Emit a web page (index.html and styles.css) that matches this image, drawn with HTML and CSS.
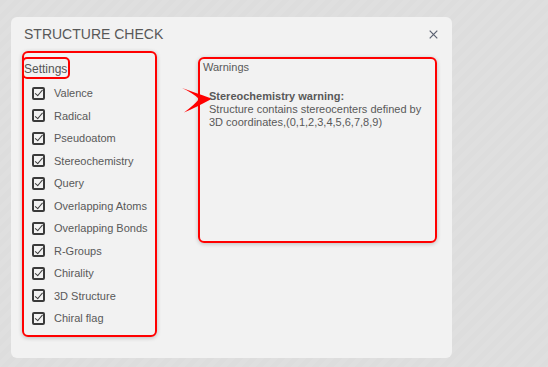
FILE: index.html
```html
<!DOCTYPE html>
<html>
<head>
<meta charset="utf-8">
<link rel="stylesheet" href="styles.css">
</head>
<body>
<div class="dialog">
  <div class="header">
    <span class="title">STRUCTURE CHECK</span>
    <svg class="close" width="9" height="9" viewBox="0 0 9 9"><path d="M0.7 0.7L8.3 8.3M8.3 0.7L0.7 8.3" stroke="#5a6070" stroke-width="1.2" fill="none"/></svg>
  </div>
  <div class="content">
    <div class="settings">
      <div class="settings-label">Settings</div>
      <div class="mark"></div>
      <ul class="list">
        <li class="row"><span class="cb"></span><span>Valence</span></li>
        <li class="row"><span class="cb"></span><span>Radical</span></li>
        <li class="row"><span class="cb"></span><span>Pseudoatom</span></li>
        <li class="row"><span class="cb"></span><span>Stereochemistry</span></li>
        <li class="row"><span class="cb"></span><span>Query</span></li>
        <li class="row"><span class="cb"></span><span>Overlapping Atoms</span></li>
        <li class="row"><span class="cb"></span><span>Overlapping Bonds</span></li>
        <li class="row"><span class="cb"></span><span>R-Groups</span></li>
        <li class="row"><span class="cb"></span><span>Chirality</span></li>
        <li class="row"><span class="cb"></span><span>3D Structure</span></li>
        <li class="row"><span class="cb"></span><span>Chiral flag</span></li>
      </ul>
    </div>
    <div class="warnings">
      <div class="warnings-label">Warnings</div>
      <svg class="arrow" width="32" height="28" viewBox="0 0 32 28"><path d="M2 2 C10 5 20 8 30 12 L30.5 13.5 C22 18 12 23 4 26.5 C11 21 16 17 19 13 C15 9 9 5 2 2 Z" fill="#f00"/></svg>
      <div class="msg">
        <div class="msg-title">Stereochemistry warning:</div>
        <div>Structure contains stereocenters defined by 3D coordinates,(0,1,2,3,4,5,6,7,8,9)</div>
      </div>
    </div>
  </div>
</div>
</body>
</html>
```
FILE: styles.css
```css
html, body {
  margin: 0;
  padding: 0;
}
body {
  width: 548px;
  height: 367px;
  overflow: hidden;
  background: repeating-linear-gradient(135deg, #dddddd 0 5px, #dfdfdf 5px 10px);
  font-family: "Liberation Sans", Arial, sans-serif;
  color: #555;
}
.dialog {
  position: relative;
  margin: 17px 0 0 11px;
  width: 441px;
  height: 341px;
  box-sizing: border-box;
  background: #f2f2f2;
  border-radius: 6px;
  padding: 7px 14px 0 11px;
}
.header {
  display: flex;
  justify-content: space-between;
  align-items: center;
  height: 20px;
}
.title {
  font-size: 14px;
  line-height: 20px;
  color: #585858;
  padding-left: 2px;
}
.close {
  display: block;
  margin-top: 1px;
}
.content {
  display: flex;
  align-items: flex-start;
  gap: 41px;
  margin-top: 7px;
}
.settings {
  position: relative;
  width: 135px;
  height: 286px;
  box-sizing: border-box;
  border: 2px solid #f00;
  border-radius: 6px;
  box-shadow: 0 1px 4px rgba(0,0,0,0.22);
  padding: 9px 0 0 0;
}
.settings-label {
  font-size: 12px;
  line-height: 14px;
  color: #555;
}
.mark {
  position: absolute;
  left: -2px;
  top: 4px;
  width: 48px;
  height: 22px;
  box-sizing: border-box;
  border: 2px solid #f00;
  border-radius: 5px;
}
.list {
  list-style: none;
  margin: 6px 0 0 0;
  padding: 0 0 0 8px;
}
.row {
  display: flex;
  align-items: center;
  gap: 9px;
  height: 22.5px;
  font-size: 11px;
  color: #595959;
}
.cb {
  position: relative;
  width: 13px;
  height: 13px;
  box-sizing: border-box;
  border: 2px solid #3a3a3a;
  border-radius: 2px;
  flex: none;
}
.cb::after {
  content: "";
  position: absolute;
  left: 2.8px;
  top: -0.3px;
  width: 3px;
  height: 6.5px;
  border-right: 1.2px solid #3a3a3a;
  border-bottom: 1.2px solid #3a3a3a;
  transform: rotate(40deg);
}
.warnings {
  position: relative;
  margin-top: 6px;
  width: 239px;
  height: 186px;
  box-sizing: border-box;
  border: 2px solid #f00;
  border-radius: 6px;
  box-shadow: 0 1px 4px rgba(0,0,0,0.22);
  padding: 2px 0 0 3px;
  font-size: 11px;
  line-height: 13px;
  color: #595959;
}
.warnings-label {
  line-height: 13px;
}
.arrow {
  position: absolute;
  left: -20px;
  top: 27px;
}
.msg {
  margin-top: 16px;
  padding-left: 6px;
  padding-right: 8px;
  line-height: 12.8px;
}
.msg-title {
  font-weight: bold;
}
```
